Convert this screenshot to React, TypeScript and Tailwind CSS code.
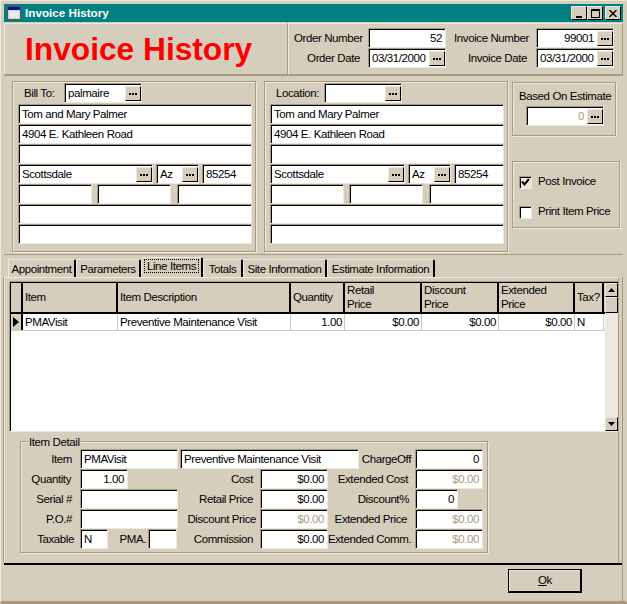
const raised = "border border-t-[#ece8e0] border-l-[#ece8e0] border-r-[#a89a80] border-b-[#a89a80]";
const sunken = "border border-t-[#a89a80] border-l-[#a89a80] border-r-[#ece8e0] border-b-[#ece8e0] shadow-[inset_1px_1px_0_#000]";
const group = "border border-[#a89a80] shadow-[inset_1px_1px_0_#ece8e0,1px_1px_0_#ece8e0]";

function Dots() {
  return (
    <button className="w-[16px] shrink-0 self-stretch bg-[#d6cebd] border border-t-[#ece8e0] border-l-[#ece8e0] border-r-black border-b-black flex items-center justify-center gap-[1px]">
      <span className="w-[2px] h-[2px] bg-black" />
      <span className="w-[2px] h-[2px] bg-black" />
      <span className="w-[2px] h-[2px] bg-black" />
    </button>
  );
}

function Field({
  value = "",
  right = false,
  dim = false,
  dots = false,
  className = "",
}: {
  value?: string;
  right?: boolean;
  dim?: boolean;
  dots?: boolean;
  className?: string;
}) {
  return (
    <div className={`flex bg-white h-[20px] pl-[3px] pt-[2px] pb-[1px] ${sunken} ${className}`}>
      <span
        className={`flex-1 min-w-0 whitespace-nowrap overflow-hidden leading-[14px] ${right ? "text-right pr-[3px]" : ""} ${
          dim ? "text-[#a89a80]" : "text-black"
        }`}
      >
        {value}
      </span>
      {dots && <Dots />}
    </div>
  );
}

function Label({ children, className = "" }: { children: React.ReactNode; className?: string }) {
  return <div className={`h-[20px] leading-[20px] whitespace-nowrap text-right ${className}`}>{children}</div>;
}

function AddressPanel({ label, code, street, name, labelWidth, fieldWidth }: any) {
  return (
    <div className={`w-[244px] h-[171px] flex flex-col pl-[5px] pr-[3px] ${group}`}>
      <div className="flex h-[22px] pt-[1px]">
        <div className={`${labelWidth} pl-[6px] leading-[20px]`}>{label}</div>
        <Field value={code} dots className={fieldWidth} />
      </div>
      <Field value={name} />
      <Field value={street} />
      <Field />
      <div className="flex">
        <Field value="Scottsdale" dots className="w-[135px]" />
        <Field value="Az" dots className="w-[43px] ml-[3px]" />
        <Field value="85254" className="flex-1 ml-[3px]" />
      </div>
      <div className="flex">
        <Field className="w-[74px]" />
        <Field className="w-[74px] ml-[5px]" />
        <Field className="flex-1 ml-[6px]" />
      </div>
      <Field />
      <Field />
    </div>
  );
}

const tabs = [
  { name: "Appointment", w: "w-[68px]" },
  { name: "Parameters", w: "w-[65px]" },
  { name: "Line Items", w: "w-[62px]", active: true },
  { name: "Totals", w: "w-[40px]" },
  { name: "Site Information", w: "w-[84px]" },
  { name: "Estimate Information", w: "w-[108px]" },
];

const cols = [
  { title: "Item", w: "w-[95px]", value: "PMAVisit" },
  { title: "Item Description", w: "w-[173px]", value: "Preventive Maintenance Visit" },
  { title: "Quantity", w: "w-[54px]", value: "1.00", right: true },
  { title: "Retail\nPrice", w: "w-[77px]", value: "$0.00", right: true },
  { title: "Discount\nPrice", w: "w-[77px]", value: "$0.00", right: true },
  { title: "Extended\nPrice", w: "w-[76px]", value: "$0.00", right: true },
  { title: "Tax?", w: "w-[29px]", value: "N" },
];

function Arrow({ up }: { up?: boolean }) {
  return (
    <div className="h-[14px] bg-[#d6cebd] border border-t-[#ece8e0] border-l-[#ece8e0] border-r-black border-b-black flex items-center justify-center">
      <svg width="7" height="4" viewBox="0 0 7 4">
        <path d={up ? "M3.5 0L7 4H0z" : "M0 0h7L3.5 4z"} fill="#000" />
      </svg>
    </div>
  );
}

export default function App() {
  return (
    <div
      className="w-[627px] h-[604px] bg-[#d6cebd] text-[11.5px] tracking-[-0.4px] text-black overflow-hidden flex flex-col pt-[3px] pl-[3px] pr-[3px] border border-t-[#ece8e0] border-l-[#ece8e0] border-r-[#d6cebd] border-b-[3px] border-b-[#a89a80]"
      style={{ fontFamily: '"Liberation Sans", Arial, sans-serif' }}
    >
      {/* title bar */}
      <div className="h-[18px] bg-[#008080] flex items-center pl-[3px] pr-[2px] shrink-0">
        <svg width="14" height="14" viewBox="0 0 14 14">
          <rect x="0.5" y="0.5" width="13" height="13" fill="#d6cebd" stroke="#555" />
          <rect x="1" y="1" width="12" height="3" fill="#1010a0" />
          <rect x="2" y="5" width="10" height="7" fill="#e8e8f0" />
        </svg>
        <span className="ml-[4px] text-white font-bold text-[11.7px] tracking-normal">Invoice History</span>
        <div className="ml-auto flex">
          <button className="w-[16px] h-[14px] bg-[#d6cebd] border border-t-[#ece8e0] border-l-[#ece8e0] border-r-black border-b-black flex items-end justify-center pb-[1px]">
            <span className="w-[6px] h-[2px] bg-black" />
          </button>
          <button className="w-[16px] h-[14px] bg-[#d6cebd] border border-t-[#ece8e0] border-l-[#ece8e0] border-r-black border-b-black flex items-center justify-center">
            <span className="w-[9px] h-[9px] border border-t-2 border-black" />
          </button>
          <button className="ml-[2px] w-[16px] h-[14px] bg-[#d6cebd] border border-t-[#ece8e0] border-l-[#ece8e0] border-r-black border-b-black flex items-center justify-center">
            <svg width="8" height="7" viewBox="0 0 8 7">
              <path d="M0.5 0L7.5 7M7.5 0L0.5 7" stroke="#000" strokeWidth="1.4" />
            </svg>
          </button>
        </div>
      </div>

      {/* header */}
      <div className="h-[53px] mt-[1px] flex shrink-0 border-b border-[#a89a80]">
        <div className={`w-[284px] flex items-center pl-[20px] pt-[1px] ${raised}`}>
          <h1 className="text-[31.7px] font-bold text-[#ff0000] leading-none tracking-normal">Invoice History</h1>
        </div>
        <div className={`flex-1 pt-[4px] pl-[5px] grid grid-cols-[74px_78px_8px_82px_78px] grid-rows-[20px_20px] ${raised}`}>
          <Label className="pr-[8px]">Order Number</Label>
          <Field value="52" right />
          <div />
          <Label className="pr-[9px]">Invoice Number</Label>
          <Field value="99001" right dots />
          <Label className="pr-[8px]">Order Date</Label>
          <Field value="03/31/2000" dots />
          <div />
          <Label className="pr-[9px]">Invoice Date</Label>
          <Field value="03/31/2000" dots />
        </div>
      </div>

      {/* address area */}
      <div className="h-[179px] flex pl-[8px] pt-[5px] gap-[8px] shrink-0 border-b border-[#a89a80]">
        <AddressPanel label="Bill To:" code="palmaire" name="Tom and Mary Palmer" street="4904 E. Kathleen Road" labelWidth="w-[46px]" fieldWidth="w-[78px]" />
        <AddressPanel label="Location:" code="" name="Tom and Mary Palmer" street="4904 E. Kathleen Road" labelWidth="w-[54px]" fieldWidth="w-[78px]" />
        <div className="flex flex-col ml-[-4px]">
          <div className={`w-[104px] h-[54px] mt-[1px] flex flex-col items-start pl-[13px] ${group}`}>
            <div className="h-[23px] leading-[26px] whitespace-nowrap -ml-[7px]">Based On Estimate</div>
            <Field value="0" right dim dots className="w-[78px]" />
          </div>
          <div className={`w-[108px] h-[67px] mt-[25px] flex flex-col pl-[6px] pt-[13px] gap-[16px] ${group}`}>
            <div className="flex items-center gap-[6px] h-[14px]">
              <span className={`w-[13px] h-[13px] bg-[#ece8e0] flex items-center justify-center ${sunken}`}>
                <svg width="9" height="8" viewBox="0 0 9 8">
                  <path d="M1 3.5L3.5 6.5L8 1" stroke="#000" strokeWidth="2" fill="none" />
                </svg>
              </span>
              <span className="whitespace-nowrap">Post Invoice</span>
            </div>
            <div className="flex items-center gap-[6px] h-[14px]">
              <span className={`w-[13px] h-[13px] bg-white ${sunken}`} />
              <span className="whitespace-nowrap">Print Item Price</span>
            </div>
          </div>
        </div>
      </div>

      {/* tabs */}
      <div className="flex pl-[4px] h-[22px] items-end shrink-0">
        {tabs.map((t) => (
          <div
            key={t.name}
            className={`${t.w} text-center whitespace-nowrap border-t border-l border-t-[#ece8e0] border-l-[#ece8e0] border-r-2 border-r-black rounded-t-[2px] ${
              t.active ? "h-[20px] leading-[16px]" : "h-[18px] leading-[18px]"
            }`}
          >
            {t.active ? <span className="border border-dotted border-black px-[2px]">{t.name}</span> : t.name}
          </div>
        ))}
      </div>

      <div className="flex-1 flex flex-col border-r border-[#a89a80]">
        {/* tab body */}
        <div className="h-[286px] shrink-0 border-t border-l border-r border-t-[#ece8e0] border-l-[#ece8e0] border-r-[#a89a80] shadow-[-1px_0_0_#a89a80] mr-[3px] pl-[4px] pt-[3px] flex flex-col">
          <div className={`h-[151px] shrink-0 flex bg-white pt-[1px] pl-[1px] border-r-0 ${sunken}`}>
            <div className="flex-1 flex flex-col min-w-0">
              <div className="flex h-[31px] bg-[#d6cebd] border-b-2 border-black">
                <div className="w-[12px] border-r-2 border-black" />
                {cols.map((c) => (
                  <div
                    key={c.title}
                    className={`${c.w} border-r-2 border-black pl-[2px] pb-[2px] whitespace-pre-line leading-[14px] flex items-center`}
                  >
                    {c.title}
                  </div>
                ))}
              </div>
              <div className="flex h-[17px] border-b border-[#c8c8c8]">
                <div className="w-[12px] bg-[#d6cebd] border-r-2 border-black flex items-center justify-center">
                  <svg width="6" height="10" viewBox="0 0 6 10">
                    <path d="M0 0L6 5L0 10z" fill="#000" />
                  </svg>
                </div>
                {cols.map((c) => (
                  <div
                    key={c.title}
                    className={`${c.w} border-r border-[#c8c8c8] pl-[2px] pr-[2px] leading-[16px] whitespace-nowrap ${c.right ? "text-right" : ""}`}
                  >
                    {c.value}
                  </div>
                ))}
              </div>
            </div>
            <div className="w-[13px] shrink-0 bg-[#ece8e0] flex flex-col">
              <Arrow up />
              <div className="h-[16px] bg-[#d6cebd] border border-t-[#ece8e0] border-l-[#ece8e0] border-r-black border-b-black" />
              <div className="flex-1" />
              <Arrow />
            </div>
          </div>

          {/* item detail */}
          <div className={`relative w-[468px] h-[112px] mt-[9px] ml-[11px] grid grid-cols-[59px_98px_82px_68px_87px_68px] grid-rows-[repeat(5,20px)] pt-[7px] ${group}`}>
            <div className="absolute left-[7px] top-[-7px] bg-[#d6cebd] px-[1px] leading-[14px]">Item Detail</div>
            <Label className="pr-[8px]">Item</Label>
            <Field value="PMAVisit" />
            <div className="col-span-3 flex">
              <Field value="Preventive Maintenance Visit" className="ml-[2px] w-[179px]" />
              <Label className="flex-1 pr-[4px]">ChargeOff</Label>
            </div>
            <Field value="0" right />

            <Label className="pr-[9px]">Quantity</Label>
            <Field value="1.00" right className="w-[48px]" />
            <Label className="pr-[7px]">Cost</Label>
            <Field value="$0.00" right />
            <Label className="pr-[7px]">Extended Cost</Label>
            <Field value="$0.00" right dim />

            <Label className="pr-[8px]">Serial #</Label>
            <Field />
            <Label className="pr-[7px]">Retail Price</Label>
            <Field value="$0.00" right />
            <Label className="pr-[6px]">Discount%</Label>
            <Field value="0" right className="w-[43px]" />

            <Label className="pr-[8px]">P.O.#</Label>
            <Field />
            <Label className="pr-[4px]">Discount Price</Label>
            <Field value="$0.00" right dim />
            <Label className="pr-[8px]">Extended Price</Label>
            <Field value="$0.00" right dim />

            <Label className="pr-[6px]">Taxable</Label>
            <div className="flex">
              <Field value="N" className="w-[28px]" />
              <Label className="w-[40px] pr-[2px]">PMA.</Label>
              <Field className="w-[29px]" />
            </div>
            <Label className="pr-[7px]">Commission</Label>
            <Field value="$0.00" right />
            <Label className="pr-[4px]">Extended Comm.</Label>
            <Field value="$0.00" right dim />
          </div>
        </div>

        {/* footer */}
        <div className="flex-1 border-t-2 border-t-black flex justify-end items-start pt-[4px] pr-[40px]">
          <button className="w-[74px] h-[24px] bg-[#d6cebd] border border-black shadow-[inset_-1px_-1px_0_#000,inset_1px_1px_0_#ece8e0] flex items-center justify-center">
            <span className="underline">O</span>k
          </button>
        </div>
      </div>
    </div>
  );
}
